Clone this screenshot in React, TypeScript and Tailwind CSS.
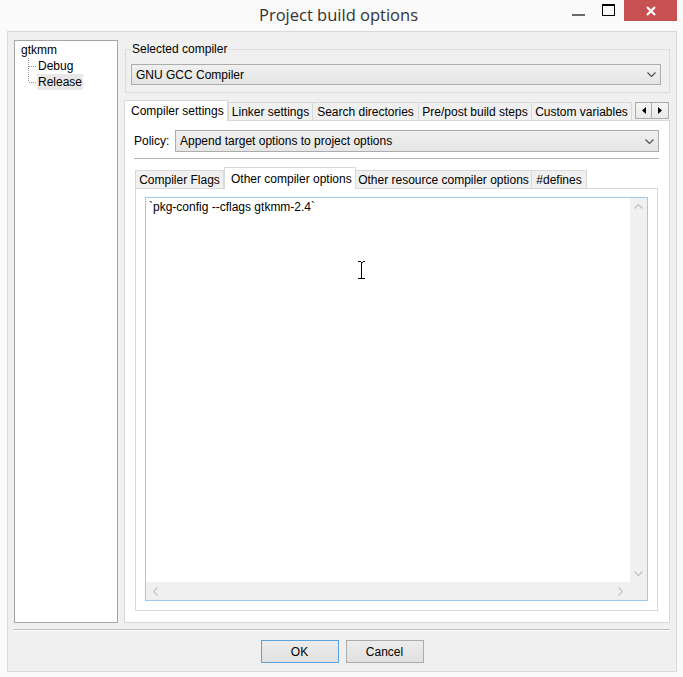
import React from "react";

function Chevron({ dir, className = "" }: { dir: "up" | "down" | "left" | "right"; className?: string }) {
  const horiz = dir === "left" || dir === "right";
  const w = horiz ? 5 : 9;
  const h = horiz ? 9 : 5;
  let d = "";
  if (dir === "down") d = "M0.5 0.5 L4.5 4.5 L8.5 0.5";
  if (dir === "up") d = "M0.5 4.5 L4.5 0.5 L8.5 4.5";
  if (dir === "left") d = "M4.5 0.5 L0.5 4.5 L4.5 8.5";
  if (dir === "right") d = "M0.5 0.5 L4.5 4.5 L0.5 8.5";
  return (
    <svg width={w} height={h} viewBox={`0 0 ${w} ${h}`} className={className}>
      <path d={d} fill="none" stroke="currentColor" strokeWidth="1.2" />
    </svg>
  );
}

function Select({ text, h }: { text: string; h: string }) {
  return (
    <div className={`${h} flex-1 border border-[#acacac] bg-linear-to-b from-[#f0f0f0] to-[#e5e5e5] flex items-center pl-[4px] pr-[4px]`}>
      <span className="flex-1 leading-[14px]">{text}</span>
      <Chevron dir="down" className="text-[#555]" />
    </div>
  );
}

function InactiveTab({ label, w, first }: { label: string; w: string; first?: boolean }) {
  return (
    <div
      className={`${w} h-[18px] bg-[#f0f0f0] border-t border-r ${first ? "border-l" : ""} border-[#d9d9d9] flex items-center justify-center whitespace-nowrap leading-[14px]`}
    >
      {label}
    </div>
  );
}

export default function App() {
  return (
    <div className="w-[683px] h-[677px] bg-[#fafafa] flex flex-col font-['Liberation_Sans',Arial,sans-serif] text-[12px] text-black select-none overflow-hidden">
      {/* Title bar */}
      <div className="h-[31px] flex shrink-0">
        <div className="flex-1" />
        <div className="pt-[4px] font-['Open_Sans',sans-serif] text-[16.5px] leading-[22px] text-[#333]">Project build options</div>
        <div className="flex-1 flex justify-end items-start pr-[6px]">
          <div className="mt-[14px] w-[13px] h-[2px] bg-[#6a6a6a]" />
          <div className="ml-[17px] mt-[4px] w-[13px] h-[12px] border border-black border-t-[2px]" />
          <div className="ml-[9px] w-[53px] h-[21px] bg-[#c75050] flex items-center justify-center">
            <svg width="10" height="10" viewBox="0 0 10 10">
              <path d="M1 1 L9 9 M9 1 L1 9" stroke="white" strokeWidth="2.2" />
            </svg>
          </div>
        </div>
      </div>

      {/* Client area */}
      <div className="ml-[7px] mr-[6px] mb-[5px] flex-1 border border-[#d9d9d9] bg-[#f0f0f0] flex flex-col">
        <div className="flex gap-[6px] px-[6px] pt-[8px]">
          {/* Tree */}
          <div className="w-[104px] h-[583px] bg-white border border-[#a5a5a5] pt-[1px] pl-[6px]">
            <div className="h-[16px] leading-[16px]">gtkmm</div>
            <div className="h-[16px] flex items-center">
              <svg width="16" height="16" viewBox="0 0 16 16" className="shrink-0">
                <path d="M7.5 0 V16 M8 8.5 H16" stroke="#9a9a9a" strokeWidth="1" strokeDasharray="1 1" shapeRendering="crispEdges" />
              </svg>
              <span className="pl-[1px] leading-[16px]">Debug</span>
            </div>
            <div className="h-[16px] flex items-center">
              <svg width="16" height="16" viewBox="0 0 16 16" className="shrink-0">
                <path d="M7.5 0 V8 M8 8.5 H16" stroke="#9a9a9a" strokeWidth="1" strokeDasharray="1 1" shapeRendering="crispEdges" />
              </svg>
              <span className="pl-[1px] pr-[1px] leading-[16px] bg-[#e8e8e8]">Release</span>
            </div>
          </div>

          {/* Right column */}
          <div className="w-[546px] h-[583px] flex flex-col">
            <fieldset className="mt-[2px] ml-[1px] min-w-0 border border-[#dcdcdc] p-0 m-0">
              <legend className="ml-[5px] px-[1px] leading-[14px]">Selected compiler</legend>
              <div className="flex mt-[8px] ml-[5px] mr-[8px] mb-[7px]">
                <Select text="GNU GCC Compiler" h="h-[21px]" />
              </div>
            </fieldset>

            {/* Outer tabs */}
            <div className="mt-[7px] flex items-end h-[20px]">
              <div className="relative z-10 -mb-px h-[21px] w-[104px] bg-white border border-b-0 border-[#d9d9d9] flex items-center pl-[6px] whitespace-nowrap leading-[14px]">
                Compiler settings
              </div>
              <InactiveTab label="Linker settings" w="w-[85px]" first />
              <InactiveTab label="Search directories" w="w-[106px]" />
              <InactiveTab label="Pre/post build steps" w="w-[113px]" />
              <InactiveTab label="Custom variables" w="w-[100px]" />
              <div className="ml-[3px] mb-[1px] h-[17px] flex">
                <div className="w-[17px] h-[17px] border border-[#acacac] bg-linear-to-b from-[#f6f6f6] to-[#e8e8e8] flex items-center justify-center">
                  <svg width="4" height="7" viewBox="0 0 4 7"><path d="M4 0 L0 3.5 L4 7 Z" fill="black" /></svg>
                </div>
                <div className="w-[17px] h-[17px] border border-l-0 border-[#acacac] bg-linear-to-b from-[#f6f6f6] to-[#e8e8e8] flex items-center justify-center">
                  <svg width="4" height="7" viewBox="0 0 4 7"><path d="M0 0 L4 3.5 L0 7 Z" fill="black" /></svg>
                </div>
              </div>
            </div>

            {/* Outer tab page */}
            <div className="flex-1 min-h-0 bg-white border border-[#d9d9d9] flex flex-col pt-[9px]">
              <div className="flex items-center pl-[9px] pr-[10px]">
                <div className="w-[41px] leading-[14px]">Policy:</div>
                <Select text="Append target options to project options" h="h-[22px]" />
              </div>
              <div className="mt-[6px] ml-[9px] mr-[10px] h-px bg-[#b4b4b4]" />

              <div className="mt-[8px] ml-[10px] mr-[11px] mb-[11px] flex-1 min-h-0 flex flex-col">
                {/* Inner tabs */}
                <div className="flex items-end h-[21px]">
                  <InactiveTab label="Compiler Flags" w="w-[89px]" first />
                  <div className="relative z-10 -mb-px h-[22px] w-[132px] bg-white border border-b-0 border-[#d9d9d9] flex items-center pl-[6px] whitespace-nowrap leading-[14px]">
                    Other compiler options
                  </div>
                  <InactiveTab label="Other resource compiler options" w="w-[176px]" />
                  <InactiveTab label="#defines" w="w-[55px]" />
                </div>

                {/* Inner page */}
                <div className="flex-1 min-h-0 bg-white border border-[#d9d9d9] pl-[9px] pr-[9px] pt-[8px] pb-[9px] flex">
                  <div className="flex-1 border border-[#9fc9ef] grid grid-cols-[1fr_17px] grid-rows-[1fr_18px]">
                    <div className="relative pl-[3px] pt-[1px] bg-white">
                      <div className="leading-[16px] whitespace-pre">`pkg-config --cflags gtkmm-2.4`</div>
                      <svg width="9" height="18" viewBox="0 0 9 18" className="absolute left-[211px] top-[63px]">
                        <path d="M1 0.5 H3.5 M5.5 0.5 H8 M3.5 1 H5.5 M4.5 1 V17 M1 17.5 H3.5 M5.5 17.5 H8 M3.5 17 H5.5" stroke="black" strokeWidth="1" fill="none" shapeRendering="crispEdges" />
                      </svg>
                    </div>
                    <div className="bg-[#f0f0f0] flex flex-col justify-between items-center py-[6px] text-[#c2c2c2]">
                      <Chevron dir="up" />
                      <Chevron dir="down" />
                    </div>
                    <div className="bg-[#f0f0f0] flex justify-between items-center px-[7px] text-[#c2c2c2]">
                      <Chevron dir="left" />
                      <Chevron dir="right" />
                    </div>
                    <div className="bg-[#f0f0f0]" />
                  </div>
                </div>
              </div>
            </div>
          </div>
        </div>

        {/* Bottom */}
        <div className="mt-[6px] mx-[6px] h-[2px] border-t border-[#bdbdbd] border-b border-b-white" />
        <div className="mt-[9px] flex justify-center gap-[7px]">
          <div className="w-[78px] h-[23px] border border-[#5ba3e0] bg-linear-to-b from-[#ececec] to-[#e1e1e1] flex items-center justify-center leading-[14px]">
            OK
          </div>
          <div className="w-[78px] h-[23px] border border-[#acacac] bg-linear-to-b from-[#ececec] to-[#e1e1e1] flex items-center justify-center leading-[14px]">
            Cancel
          </div>
        </div>
      </div>
    </div>
  );
}
